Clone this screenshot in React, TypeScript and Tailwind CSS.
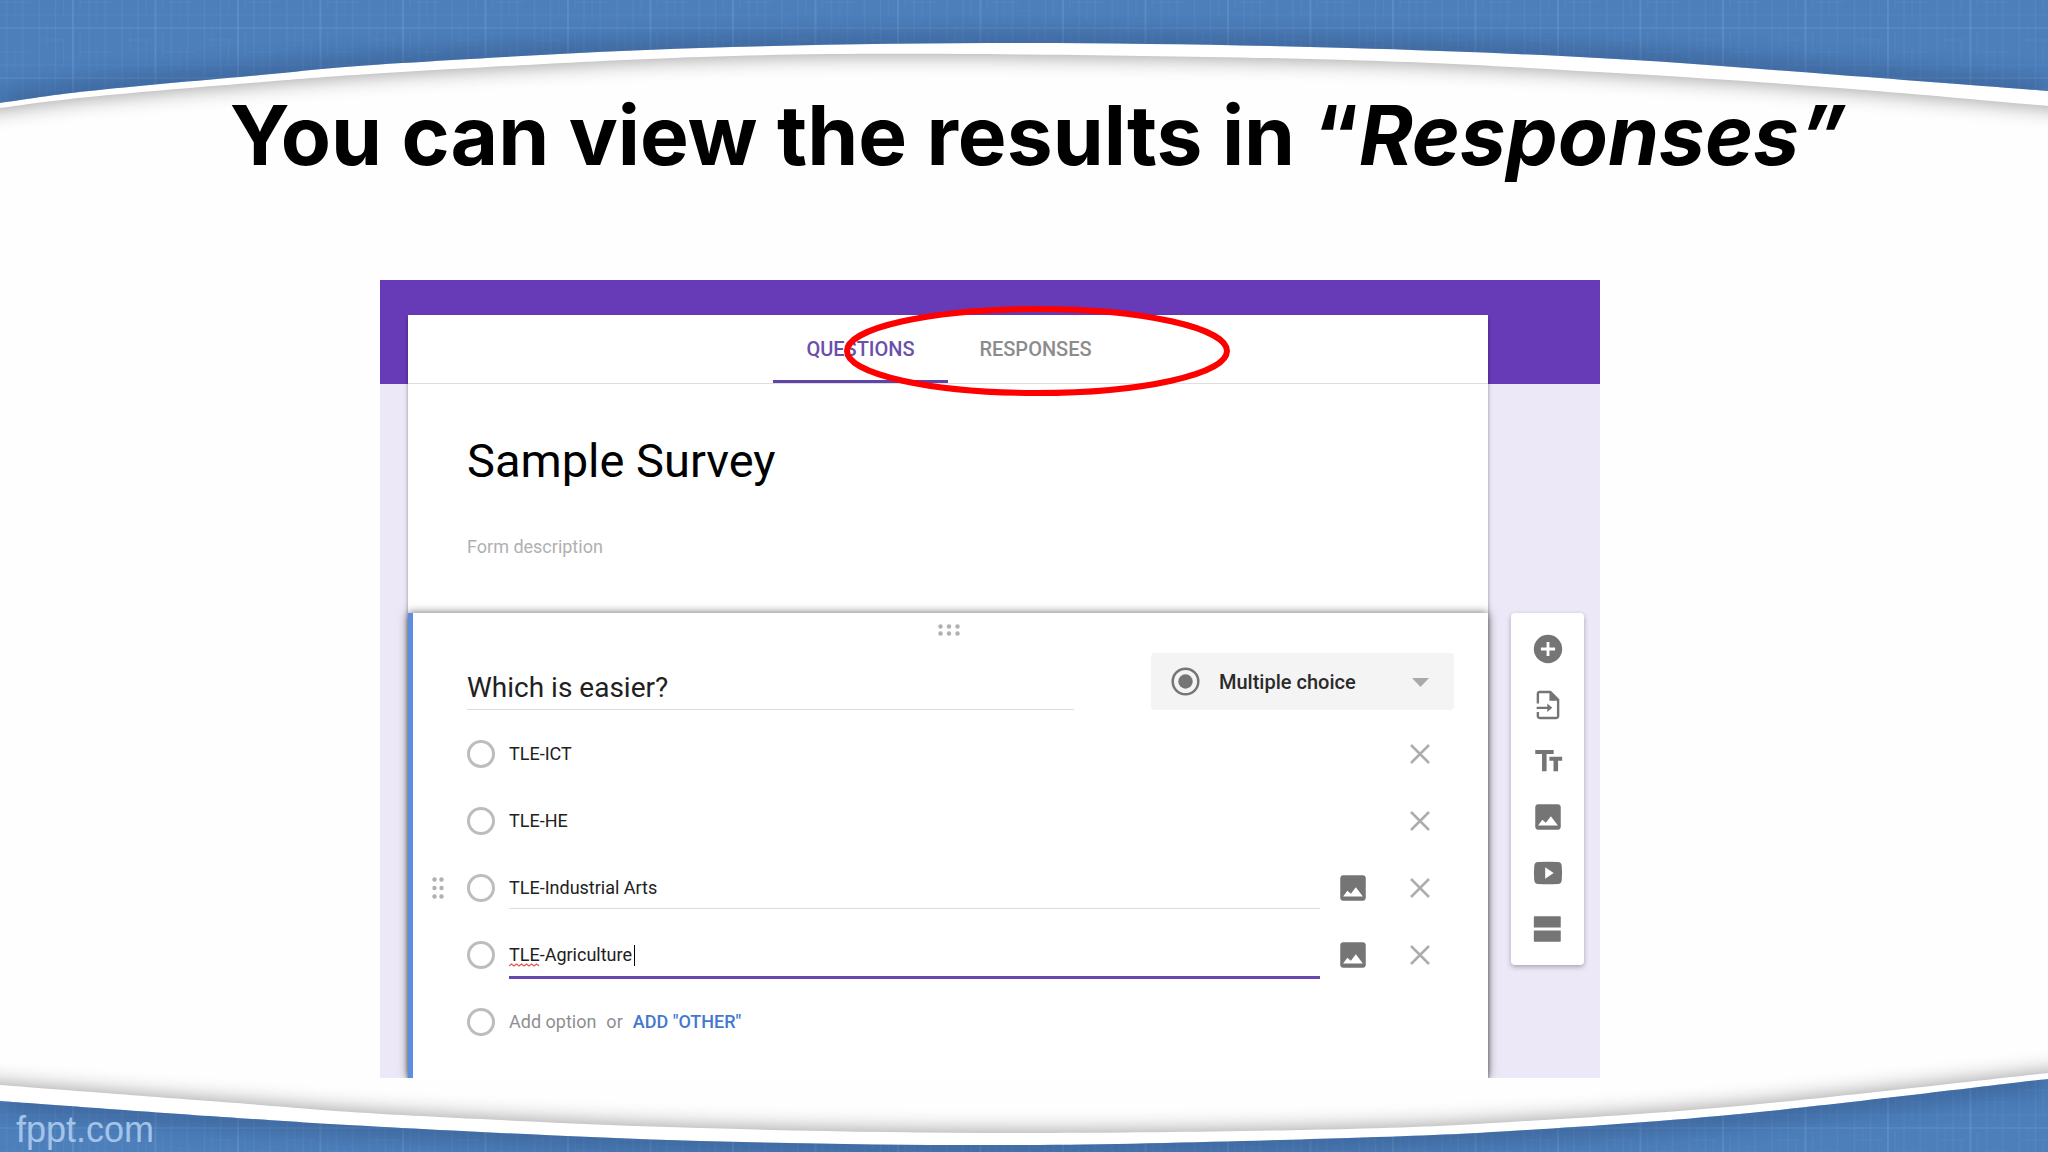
import { useState } from 'react';
import type { ReactNode } from 'react';

type Point = [number, number];

// edges of the white swoosh bands, on a 2048x1152 canvas
const TOP_OUTER: Point[] = [[0, 103], [89, 91], [250, 76], [402, 63], [700, 48], [1024, 43], [1348, 48], [1616, 59], [1839, 75], [2048, 91]];
const TOP_INNER: Point[] = [[0, 108], [89, 97], [250, 83], [402, 72], [700, 57], [960, 54], [1348, 60], [1616, 73], [1839, 88], [2048, 106]];
const BOTTOM_INNER: Point[] = [[0, 1085], [223, 1102], [402, 1115], [700, 1128], [1024, 1133], [1348, 1129], [1527, 1121], [1750, 1105], [2048, 1073]];
const BOTTOM_OUTER: Point[] = [[0, 1101], [223, 1117], [402, 1128], [700, 1141], [1024, 1145], [1348, 1138], [1527, 1130], [1750, 1113], [2048, 1079]];

// smooth curve through all the points, left to right
const curve = (pts: Point[]) =>
  pts.slice(1).reduce((path, p, i) => {
    const before = pts[i - 1] || pts[i];
    const from = pts[i];
    const after = pts[i + 2] || p;
    const c1 = [from[0] + (p[0] - before[0]) / 6, from[1] + (p[1] - before[1]) / 6];
    const c2 = [p[0] - (after[0] - from[0]) / 6, p[1] - (after[1] - from[1]) / 6];
    return `${path} C${c1.join(' ')} ${c2.join(' ')} ${p.join(' ')}`;
  }, `L${pts[0].join(' ')}`);

const line = (pts: Point[]) => curve(pts).replace('L', 'M');
const above = (pts: Point[]) => `M-80 -60 L-80 ${pts[0][1] + 6} ${curve(pts)} L2128 ${pts[pts.length - 1][1] + 6} L2128 -60 Z`;
const below = (pts: Point[]) => `M-80 1212 L-80 ${pts[0][1] - 6} ${curve(pts)} L2128 ${pts[pts.length - 1][1] - 6} L2128 1212 Z`;

function SlideBackground() {
  return (
    <svg
      className="absolute inset-0 h-full w-full"
      viewBox="0 0 2048 1152"
      preserveAspectRatio="none"
      aria-hidden="true"
    >
      <defs>
        <pattern id="weave" width="82.5" height="50" x="72" y="27" patternUnits="userSpaceOnUse">
          <rect width="82.5" height="50" fill="#4d7fbb" />
          <path d="M1 0V50" stroke="#6d9bd0" strokeWidth="1.5" opacity="0.6" />
          <path d="M17 0V50M33 0V50M50 0V50M66 0V50" stroke="#6896cc" strokeWidth="1" opacity="0.35" />
          <path d="M8 5V31M25 20V44M58 0V22M74 12V40" stroke="#6391c9" strokeWidth="1" opacity="0.3" />
          <path d="M0 1H82.5" stroke="#6896cc" strokeWidth="1.5" opacity="0.45" />
          <path d="M0 38H82.5M10 25H40M52 13H78" stroke="#6896cc" strokeWidth="1" opacity="0.25" />
        </pattern>
        <filter id="soft" x="-5%" y="-50%" width="110%" height="200%">
          <feGaussianBlur stdDeviation="11" />
        </filter>
        <clipPath id="topBlue">
          <path d={above(TOP_OUTER)} />
        </clipPath>
        <clipPath id="bottomBlue">
          <path d={below(BOTTOM_OUTER)} />
        </clipPath>
      </defs>
      <rect width="2048" height="1152" fill="#fefefe" />

      <path d={above(TOP_INNER)} fill="#000" opacity="0.42" filter="url(#soft)" />
      <path d={above(TOP_INNER)} fill="#fff" />
      <path d={above(TOP_OUTER)} fill="url(#weave)" />
      <g clipPath="url(#topBlue)">
        <path d={line(TOP_OUTER)} fill="none" stroke="#2c4a78" strokeWidth="16" opacity="0.6" filter="url(#soft)" />
      </g>

      <path d={below(BOTTOM_INNER)} fill="#000" opacity="0.42" filter="url(#soft)" />
      <path d={below(BOTTOM_INNER)} fill="#fff" />
      <path d={below(BOTTOM_OUTER)} fill="url(#weave)" />
      <g clipPath="url(#bottomBlue)">
        <path d={line(BOTTOM_OUTER)} fill="none" stroke="#2c4a78" strokeWidth="16" opacity="0.6" filter="url(#soft)" />
      </g>
    </svg>
  );
}

function Icon({ children }: { children: ReactNode }) {
  return (
    <svg className="size-[34px] fill-[#757575]" viewBox="0 0 24 24" aria-hidden="true">
      {children}
    </svg>
  );
}

const ImageIcon = () => (
  <Icon>
    <path d="M21 19V5c0-1.1-.9-2-2-2H5c-1.1 0-2 .9-2 2v14c0 1.1.9 2 2 2h14c1.1 0 2-.9 2-2z" />
    <path d="M5 18l3-4 2.5 2 3.5-4.5L19 18z" className="fill-white" />
  </Icon>
);

function Dots({ cols, rows }: { cols: number; rows: number }) {
  const dots = Array.from({ length: cols * rows }, (_, i) => [i % cols, Math.floor(i / cols)]);
  const x = cols > rows ? 8.5 : 7;
  const y = cols > rows ? 7 : 8.5;
  return (
    <svg width={(cols - 1) * x + 5} height={(rows - 1) * y + 5} className="fill-[#b0b0b0]" aria-hidden="true">
      {dots.map(([c, r]) => (
        <circle key={`${c}-${r}`} cx={c * x + 2.5} cy={r * y + 2.5} r="2.2" />
      ))}
    </svg>
  );
}

const tools = [
  {
    label: 'Add question',
    icon: (
      <Icon>
        <path d="M12 2a10 10 0 1 0 0 20 10 10 0 0 0 0-20zm5 11h-4v4h-2v-4H7v-2h4V7h2v4h4z" />
      </Icon>
    ),
  },
  {
    label: 'Import questions',
    icon: (
      <Icon>
        <path d="M14 2H6c-1.1 0-2 .9-2 2v7h1.7V3.7H13V9h5.3v11.3H5.7V17H4v3c0 1.1.9 2 2 2h12c1.1 0 2-.9 2-2V8z" />
        <path d="M4 13.2h7.5V11l3.5 3-3.5 3v-2.2H4z" />
      </Icon>
    ),
  },
  {
    label: 'Add title and description',
    icon: (
      <Icon>
        <path d="M3 4.200v2.800h4.800v12.300h3.200V7h5V4.200zM22 9h-9v2.900h2.900v7.400h3.200v-7.400H22z" />
      </Icon>
    ),
  },
  { label: 'Add image', icon: <ImageIcon /> },
  {
    label: 'Add video',
    icon: (
      <Icon>
        <path d="M5 4.2Q12 3.8 19 4.2Q21.5 4.3 21.7 7Q22.2 12 21.7 17Q21.5 19.7 19 19.8Q12 20.2 5 19.8Q2.5 19.7 2.3 17Q1.8 12 2.3 7Q2.5 4.3 5 4.2z" />
        <path d="M10 8v8l6-4z" className="fill-white" />
      </Icon>
    ),
  },
  {
    label: 'Add section',
    icon: (
      <Icon>
        <path d="M2.5 3h18q.5 0 .5.5V11H2V3.5q0-.5.5-.5zM2 13h19v7.5q0 .5-.5.5h-18q-.5 0-.5-.5z" />
      </Icon>
    ),
  },
];

const initialOptions = [
  { text: 'TLE-ICT' },
  { text: 'TLE-HE' },
  { text: 'TLE-Industrial Arts', hovered: true },
  { text: 'TLE-Agriculture', focused: true },
];

function Tabs() {
  return (
    <nav className="flex justify-center border-b border-[#dedede]">
      <div className="relative flex">
        <button className="h-17 w-[175px] border-b-3 border-[#5f45a5] pt-[2px] text-[20px] font-medium text-[#6b50ab]">
          QUESTIONS
        </button>
        <button className="h-17 w-[175px] border-b-3 border-transparent pt-[2px] text-[20px] font-medium text-[#8c8c8c]">
          RESPONSES
        </button>
        {/* red marker around the responses tab */}
        <svg className="pointer-events-none absolute -top-[10px] left-[71px]" width="386" height="92" aria-hidden="true">
          <ellipse cx="193" cy="46" rx="190" ry="42" fill="none" stroke="#fe0000" strokeWidth="6" />
        </svg>
      </div>
    </nav>
  );
}

function QuestionCard() {
  const [question, setQuestion] = useState('Which is easier?');
  const [options, setOptions] = useState(initialOptions);

  const setText = (index: number, text: string) =>
    setOptions(options.map((o, i) => (i === index ? { ...o, text } : o)));

  return (
    <section className="relative flex-1 border-l-5 border-[#5b8ee0] bg-white pr-[34px] pl-[54px] shadow-[0_0_9px_rgba(0,0,0,0.6)]">
      <div className="-ml-6 flex h-10 justify-center pt-[11px]">
        <Dots cols={3} rows={2} />
      </div>
      <div className="flex h-[57px] items-end gap-[77px]">
        <input
          aria-label="Question"
          value={question}
          onChange={(e) => setQuestion(e.target.value)}
          className="h-11 min-w-0 flex-1 border-b border-[#dcdcdc] text-[28px] text-[#212121] outline-none"
        />
        <div className="relative h-full w-[303px]">
          <select
            aria-label="Question type"
            className="h-full w-full appearance-none rounded-sm bg-[#f4f4f4] pl-[68px] text-[20px] font-medium text-[#2b2b2b] outline-none"
          >
            <option>Multiple choice</option>
          </select>
          <svg className="pointer-events-none absolute top-[14px] left-5" width="29" height="29" aria-hidden="true">
            <circle cx="14.5" cy="14.5" r="12.8" fill="none" stroke="#757575" strokeWidth="2.5" />
            <circle cx="14.5" cy="14.5" r="7.2" fill="#757575" />
          </svg>
          <svg className="pointer-events-none absolute top-[25px] right-[25px]" width="17" height="9" aria-hidden="true">
            <path d="M0 0H17L8.5 9z" fill="#a9a9a9" />
          </svg>
        </div>
      </div>

      <ul className="mt-[10px] pr-[17px]">
        {options.map((option, i) => (
          <li key={i} className="relative flex h-[67px] items-center">
            {option.hovered && (
              <span className="absolute -left-[35px]">
                <Dots cols={2} rows={3} />
              </span>
            )}
            <input
              type="radio"
              name="answer"
              aria-label={option.text}
              className="size-7 appearance-none rounded-full border-3 border-[#bdbdbd]"
            />
            <div className="relative ml-[14px] h-[43px] flex-1">
              <input
                aria-label={`Option ${i + 1}`}
                value={option.text}
                onChange={(e) => setText(i, e.target.value)}
                className={`block h-full w-full text-[18px] text-[#212121] outline-none ${
                  option.hovered
                    ? 'border-b border-[#dcdcdc]'
                    : option.focused
                      ? 'shadow-[0_3px_0_#6747b0]'
                      : ''
                }`}
              />
              {option.focused && (
                <>
                  <svg className="absolute top-[30px] left-0" width="31" height="4" aria-hidden="true">
                    <path
                      d="M0 3L2.5 1L5 3L7.5 1L10 3L12.5 1L15 3L17.5 1L20 3L22.5 1L25 3L27.5 1L30 3"
                      fill="none"
                      stroke="#e05555"
                      strokeWidth="1.2"
                    />
                  </svg>
                  <span className="absolute top-3 left-[125px] h-[21px] w-px bg-black" />
                </>
              )}
            </div>
            <span className="ml-4 size-[34px]">
              {(option.hovered || option.focused) && (
                <button aria-label="Add image to option">
                  <ImageIcon />
                </button>
              )}
            </span>
            <button
              aria-label="Remove option"
              onClick={() => setOptions(options.filter((_, n) => n !== i))}
              className="ml-[33px] flex size-[34px] items-center justify-center"
            >
              <svg width="20" height="20" viewBox="0 0 20 20" aria-hidden="true">
                <path d="M1 1L19 19M19 1L1 19" stroke="#adadad" strokeWidth="2.5" />
              </svg>
            </button>
          </li>
        ))}
        <li className="flex h-[67px] items-center text-[18px] text-[#8f8f8f]">
          <input
            type="radio"
            name="answer"
            aria-label="New option"
            className="size-7 appearance-none rounded-full border-3 border-[#bdbdbd]"
          />
          <button className="ml-[14px]">Add option</button>
          <span className="ml-[10px]">or</span>
          <button className="ml-[10px] font-medium text-[#4478cf]">ADD "OTHER"</button>
        </li>
      </ul>
    </section>
  );
}

export default function App() {
  const [title, setTitle] = useState('Sample Survey');
  const [description, setDescription] = useState('');

  return (
    <div className="relative flex min-h-screen flex-col overflow-hidden font-['Roboto',sans-serif]">
      <SlideBackground />

      <h1 className="relative mt-[80px] pl-7 text-center font-['Inter',sans-serif] text-[82px] leading-[112px] font-bold whitespace-nowrap text-black">
        You can view the results in “<em>Responses”</em>
      </h1>

      <main className="relative mt-[88px] mr-[448px] mb-[74px] ml-[380px] flex flex-1 overflow-hidden bg-[linear-gradient(#673ab7_104px,#ede8f7_104px)] pt-[35px] pr-4 pl-7">
        <div className="flex flex-1 flex-col bg-white shadow-[0_3px_4px_rgba(0,0,0,0.4)]">
          <Tabs />
          <header className="h-[229px] px-[59px] pt-[45px]">
            <input
              aria-label="Form title"
              value={title}
              onChange={(e) => setTitle(e.target.value)}
              className="block h-16 w-full text-[47px] text-black outline-none"
            />
            <input
              aria-label="Form description"
              placeholder="Form description"
              value={description}
              onChange={(e) => setDescription(e.target.value)}
              className="mt-[33px] block h-10 w-full text-[18px] outline-none placeholder:text-[#b0b0b0]"
            />
          </header>
          <QuestionCard />
        </div>

        <aside className="mt-[298px] ml-[23px] flex w-[73px] flex-col self-start rounded-sm bg-white py-2 shadow-[0_2px_5px_rgba(0,0,0,0.3)]">
          {tools.map((tool) => (
            <button key={tool.label} aria-label={tool.label} className="flex h-14 items-center justify-center">
              {tool.icon}
            </button>
          ))}
        </aside>
      </main>

      <footer className="absolute bottom-1 left-4 font-['Liberation_Sans',sans-serif] text-[36px] leading-9 text-[#a3c4e8]">
        fppt.com
      </footer>
    </div>
  );
}
